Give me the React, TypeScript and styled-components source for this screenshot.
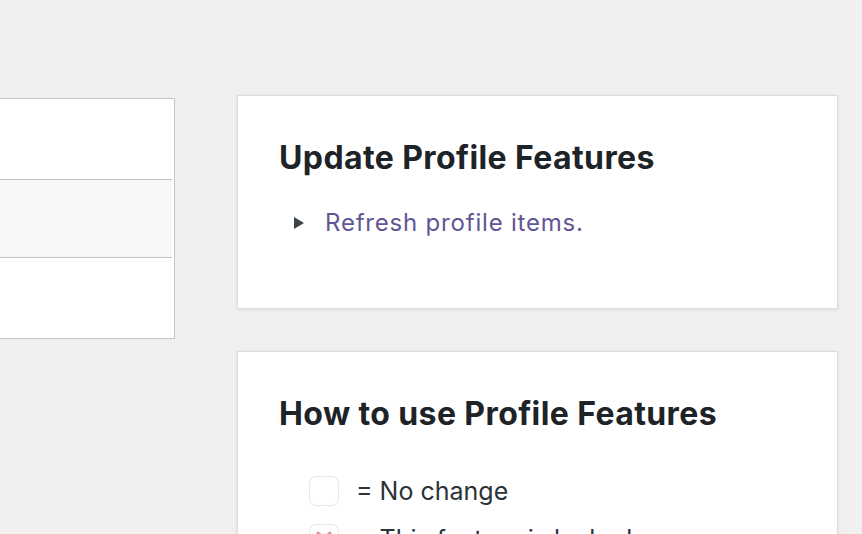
import { FC } from "react";
import styled, { createGlobalStyle } from "styled-components";

// 全体スタイル
const GlobalStyle = createGlobalStyle`
  html, body {
    margin: 0;
    padding: 0;
    background: #f0f0f1;
    font-family: Inter, "Noto Sans", "Liberation Sans", sans-serif;
    color: #2c3338;
    overflow: hidden;
  }
`;

type Legend = { kind: "none" | "deny"; label: string };

const legends: Legend[] = [
  { kind: "none", label: "= No change" },
  { kind: "deny", label: "= This feature is locked" },
];

export const App: FC = () => {
  return (
    <>
      <GlobalStyle />
      <SPage>
        <SLeftCol>
          <STable>
            <SRow />
            <SRow $alt />
            <SRow $last />
          </STable>
        </SLeftCol>

        <SRightCol>
          <SCard>
            <STitle>Update Profile Features</STitle>
            <SSummary>
              <STriangle />
              <SLink href="#">Refresh profile items.</SLink>
            </SSummary>
          </SCard>

          <SCard>
            <STitle>How to use Profile Features</STitle>
            <SLegendList>
              {legends.map((l) => (
                <SLegendItem key={l.label}>
                  <SCheck>
                    {l.kind === "deny" && (
                      <svg width="20" height="20" viewBox="0 0 20 20">
                        <path
                          d="M4 4 L16 16 M16 4 L4 16"
                          stroke="#e68ca0"
                          strokeWidth="3"
                          strokeLinecap="round"
                        />
                      </svg>
                    )}
                  </SCheck>
                  <span>{l.label}</span>
                </SLegendItem>
              ))}
            </SLegendList>
          </SCard>
        </SRightCol>
      </SPage>
    </>
  );
};

export default App;

//Style
const SPage = styled.div`
  display: grid;
  grid-template-columns: 175px 601px;
  column-gap: 62px;
  height: 534px;
  overflow: hidden;
`;

const SLeftCol = styled.div`
  padding-top: 98px;
  margin-left: -1px;
`;

const STable = styled.div`
  background: #fff;
  border: 1px solid #c3c4c7;
  padding-right: 2px;
  display: flex;
  flex-direction: column;
`;

const SRow = styled.div<{ $alt?: boolean; $last?: boolean }>`
  height: ${(p) => (p.$alt ? "77px" : "80px")};
  background: ${(p) => (p.$alt ? "#f6f7f7" : "#fff")};
  border-bottom: ${(p) => (p.$last ? "none" : "1px solid #c3c4c7")};
`;

const SRightCol = styled.div`
  padding-top: 95px;
  display: flex;
  flex-direction: column;
  gap: 42px;
`;

const SCard = styled.div`
  background: #fff;
  border: 1px solid #dcdcde;
  box-shadow: 0 1px 4px rgba(0, 0, 0, 0.08);
  padding: 44px 41px 0 41px;
  min-height: 168px;
`;

const STitle = styled.h2`
  margin: 0;
  font-size: 32px;
  line-height: 36px;
  font-weight: 700;
  color: #1d2327;
  letter-spacing: 0.4px;
`;

const SSummary = styled.div`
  display: flex;
  align-items: center;
  margin-top: 32px;
  padding-left: 15px;
  gap: 21px;
  height: 30px;
`;

const STriangle = styled.span`
  width: 0;
  height: 0;
  border-top: 6.5px solid transparent;
  border-bottom: 6.5px solid transparent;
  border-left: 10px solid #3c434a;
`;

const SLink = styled.a`
  font-size: 24px;
  line-height: 30px;
  letter-spacing: 0.8px;
  color: #625694;
  text-decoration: none;
`;

const SLegendList = styled.ul`
  list-style: none;
  margin: 44px 0 0;
  padding: 0 0 0 30px;
  display: flex;
  flex-direction: column;
  gap: 18px;
`;

const SLegendItem = styled.li`
  display: flex;
  align-items: center;
  gap: 17px;
  font-size: 25px;
  line-height: 30px;
  color: #2c3338;
  white-space: nowrap;
`;

const SCheck = styled.span`
  box-sizing: border-box;
  flex: none;
  width: 30px;
  height: 30px;
  border: 1.5px solid #e6e6e8;
  border-radius: 7px;
  display: flex;
  align-items: center;
  justify-content: center;
  background: #fff;
`;
